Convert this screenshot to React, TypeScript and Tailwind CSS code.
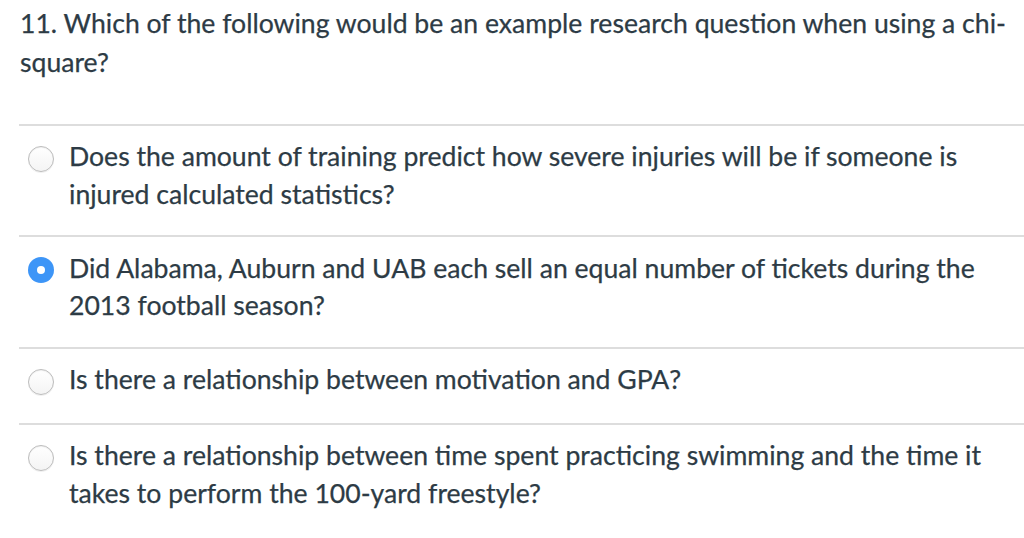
import React from "react";

const options = [
  {
    text: "Does the amount of training predict how severe injuries will be if someone is injured calculated statistics?",
    selected: false,
  },
  {
    text: "Did Alabama, Auburn and UAB each sell an equal number of tickets during the 2013 football season?",
    selected: true,
  },
  { text: "Is there a relationship between motivation and GPA?", selected: false },
  {
    text: "Is there a relationship between time spent practicing swimming and the time it takes to perform the 100-yard freestyle?",
    selected: false,
  },
];

function Radio({ selected }: { selected: boolean }) {
  if (selected) {
    return (
      <div className="mt-[7.5px] flex h-[26px] w-[26px] shrink-0 items-center justify-center rounded-full bg-[#3d95f7]">
        <div className="h-[8px] w-[8px] rounded-full bg-white" />
      </div>
    );
  }
  return (
    <div className="mt-[7.5px] h-[26px] w-[26px] shrink-0 rounded-full border border-[#bcbcbc] bg-gradient-to-b from-white to-[#f4f4f4] shadow-[inset_0_1px_1px_rgba(0,0,0,0.06),0_1px_0_rgba(0,0,0,0.06)]" />
  );
}

export default function App() {
  return (
    <div
      className="min-h-[538px] w-[1024px] bg-white text-[#2d3b45] [-webkit-text-stroke:0.25px_#2d3b45]"
      style={{ fontFamily: "Lato, 'Open Sans', sans-serif" }}
    >
      <div className="pl-[20px] pr-[10px] pt-[4px] text-[26.6px] leading-[38.5px]">
        11. Which of the following would be an example research question when using a chi-square?
      </div>
      <div className="ml-[19px] mt-[42.5px]">
        {options.map((o, i) => (
          <div key={i} className="flex gap-[15px] border-t-2 border-[#dddddd] pb-[22.2px] pl-[9px] pr-[20px] pt-[12.5px]">
            <Radio selected={o.selected} />
            <div className="min-h-[39.3px] text-[26.6px] leading-[37.5px]">{o.text}</div>
          </div>
        ))}
      </div>
    </div>
  );
}
